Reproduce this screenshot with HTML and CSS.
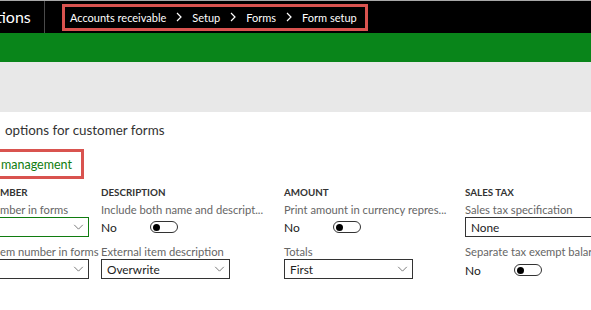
FILE: index.html
```html
<!DOCTYPE html>
<html lang="en">
  <head>
    <meta charset="UTF-8">
    <title>Form setup</title>
    <link rel="stylesheet" href="styles.css">
  </head>
  <body>
    <header class="topbar">
      <div class="app-name"><span>tions</span></div>
      <nav class="crumbs">
        <span>Accounts receivable</span>
        <svg class="chev" viewBox="0 0 6 10"><polyline points="1,1 5,5 1,9" /></svg>
        <span>Setup</span>
        <svg class="chev" viewBox="0 0 6 10"><polyline points="1,1 5,5 1,9" /></svg>
        <span>Forms</span>
        <svg class="chev" viewBox="0 0 6 10"><polyline points="1,1 5,5 1,9" /></svg>
        <span>Form setup</span>
      </nav>
    </header>
    <div class="greenbar"></div>
    <div class="actionbar"></div>

    <main class="content">
      <h1 class="page-title">options for customer forms</h1>
      <div class="tab"><span class="tab-label">management</span></div>

      <div class="groups">
        <section class="group group-first">
          <h2>MBER</h2>
          <label>mber in forms</label>
          <div class="select select-active select-cut"><span></span><svg class="caret" viewBox="0 0 12 7"><polyline points="1,1 6,6 11,1" /></svg></div>
          <label class="label-second">em number in forms</label>
          <div class="select select-cut"><span></span><svg class="caret" viewBox="0 0 12 7"><polyline points="1,1 6,6 11,1" /></svg></div>
        </section>

        <section class="group">
          <h2>DESCRIPTION</h2>
          <label>Include both name and descript...</label>
          <div class="toggle-row"><span>No</span><span class="toggle"></span></div>
          <label class="label-second">External item description</label>
          <div class="select"><span>Overwrite</span><svg class="caret" viewBox="0 0 12 7"><polyline points="1,1 6,6 11,1" /></svg></div>
        </section>

        <section class="group">
          <h2>AMOUNT</h2>
          <label>Print amount in currency repres...</label>
          <div class="toggle-row"><span>No</span><span class="toggle"></span></div>
          <label class="label-second">Totals</label>
          <div class="select"><span>First</span><svg class="caret" viewBox="0 0 12 7"><polyline points="1,1 6,6 11,1" /></svg></div>
        </section>

        <section class="group group-last">
          <h2>SALES TAX</h2>
          <label>Sales tax specification</label>
          <div class="select select-wide"><span>None</span></div>
          <label class="label-second">Separate tax exempt balar</label>
          <div class="toggle-row toggle-row-low"><span>No</span><span class="toggle"></span></div>
        </section>
      </div>
    </main>
  </body>
</html>
```

FILE: styles.css
```css
html {
  font-family: Lato, sans-serif;
}

body {
  margin: 0;
  width: 591px;
  height: 310px;
  overflow: hidden;
  background-color: #fff;
  color: #333;
}

/* top navigation */
.topbar {
  display: flex;
  align-items: center;
  height: 32px;
  border-top: 1px solid #a8a8a8;
  background-color: #000;
  color: #fff;
}

.app-name {
  width: 45px;
  height: 32px;
  line-height: 32px;
  font-size: 16px;
  border-right: 1px solid #4a4a4a;
  box-sizing: border-box;
  overflow: hidden;
  white-space: nowrap;
}

.app-name span {
  margin-left: -4px;
}

.crumbs {
  display: flex;
  align-items: center;
  gap: 10px;
  height: 27px;
  margin-left: 17px;
  padding: 0 8px 0 5px;
  border: 3px solid #d9534f;
  box-sizing: border-box;
  font-size: 11px;
  white-space: nowrap;
}

.chev {
  width: 6px;
  height: 10px;
  fill: none;
  stroke: #fff;
  stroke-width: 1.2;
}

.greenbar {
  height: 29px;
  background-color: #09851a;
}

.actionbar {
  height: 50px;
  background-color: #e8e8e8;
}

/* page body */
.content {
  padding-top: 10px;
}

.page-title {
  margin: 0 0 10px 5px;
  height: 17px;
  font-size: 13.4px;
  font-weight: normal;
  line-height: 17px;
  color: #333;
}

.tab {
  width: 87px;
  height: 30px;
  margin-left: -3px;
  border: 3px solid #d9534f;
  box-sizing: border-box;
  display: flex;
  align-items: center;
  padding-left: 1px;
}

.tab-label {
  font-size: 12.5px;
  color: #107c10;
}

.groups {
  display: flex;
  margin-top: 5px;
}

.group {
  width: 171px;
  margin-left: 12px;
  flex-shrink: 0;
}

.group-first {
  width: 89px;
  margin-left: 0;
}

.group-last {
  margin-left: 10px;
  width: 140px;
}

.group h2 {
  margin: 0;
  height: 16px;
  font-size: 9.8px;
  font-weight: bold;
  line-height: 16px;
  color: #333;
  white-space: nowrap;
}

.group label {
  display: block;
  height: 14px;
  margin-top: 3px;
  font-size: 11.2px;
  line-height: 14px;
  color: #666;
  white-space: nowrap;
}

.group .label-second {
  margin-top: 8px;
}

.select {
  display: flex;
  align-items: center;
  justify-content: space-between;
  width: 129px;
  height: 20px;
  padding: 0 4px 0 5px;
  border: 1px solid #333;
  box-sizing: border-box;
  font-size: 11.8px;
  color: #222;
}

.select-active {
  border-color: #107c10;
}

.select-cut {
  width: 91px;
  margin-left: -2px;
}

.select-wide {
  width: 140px;
  border-right: none;
}

.caret {
  width: 11px;
  height: 6px;
  fill: none;
  stroke: #666;
  stroke-width: 1;
}

.toggle-row {
  display: flex;
  align-items: center;
  gap: 33px;
  height: 20px;
  font-size: 12px;
  color: #222;
}

.toggle {
  position: relative;
  width: 28px;
  height: 12px;
  border: 1px solid #333;
  border-radius: 7px;
  box-sizing: border-box;
}

.toggle::before {
  content: "";
  position: absolute;
  left: 2px;
  top: 1.5px;
  width: 7px;
  height: 7px;
  border-radius: 50%;
  background-color: #000;
}

.toggle-row-low {
  margin-top: 1px;
}
```
